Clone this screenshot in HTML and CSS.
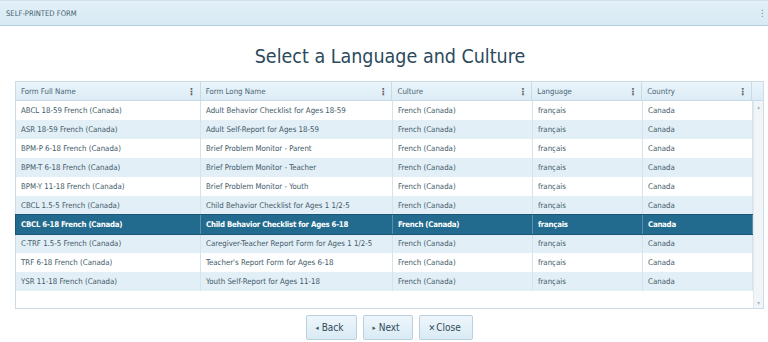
FILE: index.html
```html
<!DOCTYPE html>
<html>
<head>
<meta charset="utf-8">
<link rel="stylesheet" href="styles.css">
</head>
<body>
<div class="titlebar"><span class="titletext">SELF-PRINTED FORM</span><span class="tbmenu">⋮</span></div>
<h1 class="title">Select a Language and Culture</h1>
<div class="grid">
  <div class="ghead">
    <div class="hc c1"><span>Form Full Name</span><span class="dots">⋮</span></div>
    <div class="hc c2"><span>Form Long Name</span><span class="dots">⋮</span></div>
    <div class="hc c3"><span>Culture</span><span class="dots">⋮</span></div>
    <div class="hc c4"><span>Language</span><span class="dots">⋮</span></div>
    <div class="hc c5"><span>Country</span><span class="dots">⋮</span></div>
    <div class="hc sb"></div>
  </div>
  <div class="gbody">
    <div class="rows">
      <div class="row"><div class="c c1">ABCL 18-59 French (Canada)</div><div class="c c2">Adult Behavior Checklist for Ages 18-59</div><div class="c c3">French (Canada)</div><div class="c c4">français</div><div class="c c5">Canada</div></div>
      <div class="row alt"><div class="c c1">ASR 18-59 French (Canada)</div><div class="c c2">Adult Self-Report for Ages 18-59</div><div class="c c3">French (Canada)</div><div class="c c4">français</div><div class="c c5">Canada</div></div>
      <div class="row"><div class="c c1">BPM-P 6-18 French (Canada)</div><div class="c c2">Brief Problem Monitor - Parent</div><div class="c c3">French (Canada)</div><div class="c c4">français</div><div class="c c5">Canada</div></div>
      <div class="row alt"><div class="c c1">BPM-T 6-18 French (Canada)</div><div class="c c2">Brief Problem Monitor - Teacher</div><div class="c c3">French (Canada)</div><div class="c c4">français</div><div class="c c5">Canada</div></div>
      <div class="row"><div class="c c1">BPM-Y 11-18 French (Canada)</div><div class="c c2">Brief Problem Monitor - Youth</div><div class="c c3">French (Canada)</div><div class="c c4">français</div><div class="c c5">Canada</div></div>
      <div class="row alt"><div class="c c1">CBCL 1.5-5 French (Canada)</div><div class="c c2">Child Behavior Checklist for Ages 1 1/2-5</div><div class="c c3">French (Canada)</div><div class="c c4">français</div><div class="c c5">Canada</div></div>
      <div class="row sel"><div class="c c1">CBCL 6-18 French (Canada)</div><div class="c c2">Child Behavior Checklist for Ages 6-18</div><div class="c c3">French (Canada)</div><div class="c c4">français</div><div class="c c5">Canada</div></div>
      <div class="row alt"><div class="c c1">C-TRF 1.5-5 French (Canada)</div><div class="c c2">Caregiver-Teacher Report Form for Ages 1 1/2-5</div><div class="c c3">French (Canada)</div><div class="c c4">français</div><div class="c c5">Canada</div></div>
      <div class="row"><div class="c c1">TRF 6-18 French (Canada)</div><div class="c c2">Teacher's Report Form for Ages 6-18</div><div class="c c3">French (Canada)</div><div class="c c4">français</div><div class="c c5">Canada</div></div>
      <div class="row alt"><div class="c c1">YSR 11-18 French (Canada)</div><div class="c c2">Youth Self-Report for Ages 11-18</div><div class="c c3">French (Canada)</div><div class="c c4">français</div><div class="c c5">Canada</div></div>
    </div>
    <div class="scroll"><span class="arr">▴</span><span class="arr">▾</span></div>
  </div>
</div>
<div class="buttons">
  <button class="btn"><span class="ic">◂</span>Back</button>
  <button class="btn"><span class="ic">▸</span>Next</button>
  <button class="btn"><span class="icx">✕</span>Close</button>
</div>
</body>
</html>
```
FILE: styles.css
```css
* { box-sizing: border-box; }
body {
  margin: 0;
  width: 768px;
  height: 342px;
  overflow: hidden;
  background: #ffffff;
  font-family: "DejaVu Sans Condensed", "DejaVu Sans", Verdana, sans-serif;
  color: #3d5866;
}
.titlebar {
  height: 26px;
  background: linear-gradient(#e2f0f8, #d8eaf4);
  border-top: 1px solid #cfe3ee;
  border-bottom: 1px solid #b3cfdd;
  display: flex;
  align-items: center;
  justify-content: space-between;
  padding: 0 2px 0 6px;
}
.titletext {
  font-size: 7.6px;
  color: #45606e;
}
.tbmenu {
  font-size: 9px;
  color: #6a8290;
}
.title {
  margin: 18px 0 0 0;
  height: 37px;
  text-align: center;
  font-weight: normal;
  font-size: 19.5px;
  line-height: 26px;
  color: #2b4a5b;
  padding-left: 12px;
}
.grid {
  margin: 0 4px 0 15px;
  border: 1px solid #cddde6;
  height: 228px;
  display: flex;
  flex-direction: column;
}
.ghead {
  display: flex;
  height: 19px;
  background: linear-gradient(#eaf4fa, #dcecf6);
  border-bottom: 1px solid #c7dbe6;
}
.hc {
  display: flex;
  align-items: center;
  justify-content: space-between;
  padding: 0 4px 0 5px;
  font-size: 7.8px;
  color: #4a6473;
  border-right: 1px solid #c7dbe6;
}
.dots {
  font-size: 10px;
  font-weight: bold;
  color: #5a5a5a;
}
.c1 { width: 185px; }
.c2 { width: 192px; }
.c3 { width: 140px; }
.c4 { width: 110px; }
.c5 { width: 110px; }
.sb { width: 11px; border-right: none; padding: 0; }
.gbody {
  display: flex;
  flex: 1;
}
.rows {
  width: 737px;
}
.row {
  display: flex;
  height: 19px;
  background: #ffffff;
}
.row.alt { background: #e3eff7; }
.row.sel {
  background: #236b8e;
  color: #ffffff;
  font-weight: bold;
  letter-spacing: -0.25px;
  outline: 1px solid #1b5676;
}
.c {
  display: flex;
  align-items: center;
  padding: 0 5px;
  font-size: 7.8px;
  border-right: 1px solid #d5e4ec;
  white-space: nowrap;
  overflow: hidden;
}
.row.sel .c { border-right-color: #5a90ad; }
.scroll {
  flex: 1;
  background: #f1f5f8;
  border-left: 1px solid #e0e8ee;
  display: flex;
  flex-direction: column;
  justify-content: space-between;
  align-items: center;
  padding: 2px 0;
}
.arr {
  font-size: 6px;
  color: #a7b6bf;
}
.buttons {
  display: flex;
  justify-content: center;
  gap: 6px;
  margin-top: 6px;
  padding-left: 10px;
}
.btn {
  height: 25px;
  padding: 0 9px;
  border: 1px solid #b9d1df;
  border-radius: 2px;
  background: linear-gradient(#eef6fb, #d9eaf4);
  font-family: "DejaVu Sans Condensed", "DejaVu Sans", Verdana, sans-serif;
  font-size: 10px;
  color: #2f4a58;
  display: flex;
  align-items: center;
}
.btn:nth-child(1) { width: 51px; }
.btn:nth-child(2) { width: 50px; }
.btn:nth-child(3) { width: 54px; }
.ic { font-size: 7px; margin-right: 3px; color: #3b5766; }
.icx { font-size: 9px; font-weight: bold; margin-right: 1px; color: #2f4a58; }
```
